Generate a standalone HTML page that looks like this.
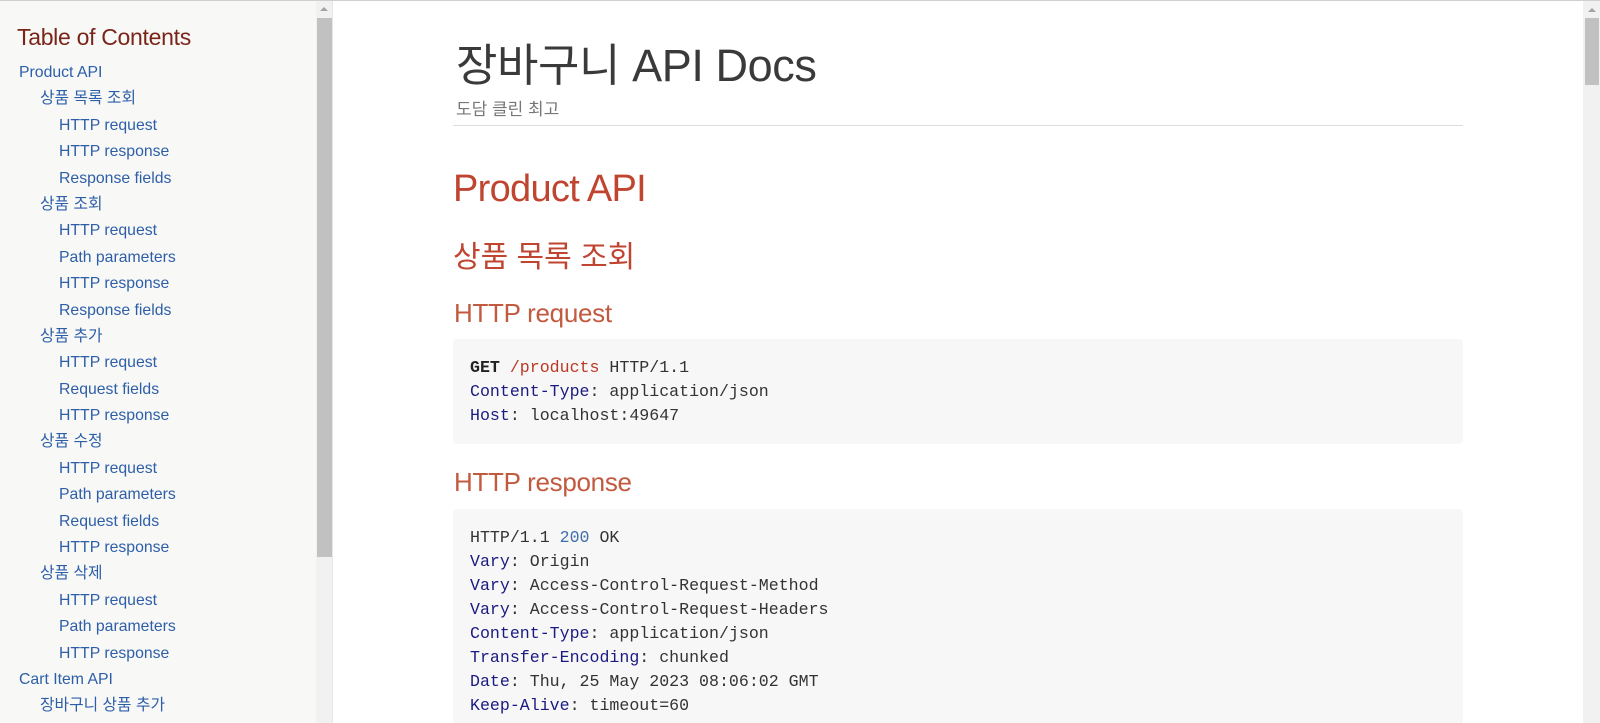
<!DOCTYPE html>
<html><head><meta charset="utf-8"><style>
*{margin:0;padding:0;box-sizing:border-box}
html,body{width:1600px;height:723px;overflow:hidden;background:#fff}
body{position:relative;font-family:"Liberation Sans","Noto Sans CJK KR",sans-serif}
.topline{position:absolute;left:0;top:0;width:1600px;height:1px;background:#cfcfcf;z-index:5}
#toc{position:absolute;left:0;top:0;width:333px;height:723px;background:#f8f8f7;border-right:1px solid #e7e7e9}
#toc h2{position:absolute;left:17px;top:21px;font-size:23px;font-weight:normal;color:#7a2518;line-height:32px;letter-spacing:-0.3px}
#toc ul{position:absolute;left:0;top:60px;list-style:none}
#toc li{height:26.4px;line-height:26.4px;font-size:15.8px;color:#2d5ea8;white-space:nowrap}
.l1{padding-left:19px}.l2{padding-left:40px}.l3{padding-left:59px}
.sb{position:absolute;background:#f1f1f1}
.thumb{position:absolute;background:#c1c1c1}
.arr{position:absolute;width:0;height:0;border-left:4px solid transparent;border-right:4px solid transparent;border-bottom:4px solid #a3a3a3}
.t{position:absolute;white-space:nowrap}
h1.t{left:456px;top:38px;font-size:45px;line-height:56px;font-weight:normal;color:#3a3a3a;letter-spacing:-0.4px}
.sub{left:456px;top:98px;font-size:17px;line-height:24px;color:#777}
.hr{position:absolute;left:453px;top:125px;width:1010px;height:1px;background:#dddddf}
.h2a{left:453px;top:166px;font-size:38px;line-height:46px;color:#bf4530;letter-spacing:-0.7px}
.h2b{left:453px;top:240px;font-size:30px;line-height:36px;color:#bf4530}
.h3{left:454px;top:298px;font-size:26px;line-height:30px;color:#c25a40;letter-spacing:-0.3px}
.code{position:absolute;left:453px;width:1010px;background:#f7f7f8;border-radius:4px;padding:17px;font-family:"Liberation Mono",monospace;font-size:16.6px;line-height:24px;color:#333;white-space:pre}
.k{color:#1a1a80}.r{color:#ba3925}.n{color:#3f6fa8}
</style></head><body>
<div class="topline"></div>
<div id="toc">
<h2>Table of Contents</h2>
<ul>
<li class="l1">Product API</li>
<li class="l2">상품 목록 조회</li>
<li class="l3">HTTP request</li>
<li class="l3">HTTP response</li>
<li class="l3">Response fields</li>
<li class="l2">상품 조회</li>
<li class="l3">HTTP request</li>
<li class="l3">Path parameters</li>
<li class="l3">HTTP response</li>
<li class="l3">Response fields</li>
<li class="l2">상품 추가</li>
<li class="l3">HTTP request</li>
<li class="l3">Request fields</li>
<li class="l3">HTTP response</li>
<li class="l2">상품 수정</li>
<li class="l3">HTTP request</li>
<li class="l3">Path parameters</li>
<li class="l3">Request fields</li>
<li class="l3">HTTP response</li>
<li class="l2">상품 삭제</li>
<li class="l3">HTTP request</li>
<li class="l3">Path parameters</li>
<li class="l3">HTTP response</li>
<li class="l1">Cart Item API</li>
<li class="l2">장바구니 상품 추가</li>
</ul>
<div class="sb" style="left:316px;top:0;width:16px;height:723px"></div>
<div class="thumb" style="left:317px;top:18px;width:15px;height:539px"></div>
<div class="arr" style="left:320px;top:7px"></div>
</div>
<div class="sb" style="left:1583px;top:0;width:17px;height:723px"></div>
<div class="thumb" style="left:1585px;top:18px;width:14px;height:67px"></div>
<div class="arr" style="left:1588px;top:8px"></div>

<h1 class="t">장바구니 API Docs</h1>
<div class="t sub">도담 클린 최고</div>
<div class="hr"></div>
<div class="t h2a">Product API</div>
<div class="t h2b">상품 목록 조회</div>
<div class="t h3">HTTP request</div>
<div class="code" style="top:339px;height:105px"><b style="color:#222">GET</b> <span class="r">/products</span> HTTP/1.1
<span class="k">Content-Type</span>: application/json
<span class="k">Host</span>: localhost:49647</div>
<div class="t h3" style="top:467px">HTTP response</div>
<div class="code" style="top:509px;height:240px">HTTP/1.1 <span class="n">200</span> OK
<span class="k">Vary</span>: Origin
<span class="k">Vary</span>: Access-Control-Request-Method
<span class="k">Vary</span>: Access-Control-Request-Headers
<span class="k">Content-Type</span>: application/json
<span class="k">Transfer-Encoding</span>: chunked
<span class="k">Date</span>: Thu, 25 May 2023 08:06:02 GMT
<span class="k">Keep-Alive</span>: timeout=60</div>
</body></html>
